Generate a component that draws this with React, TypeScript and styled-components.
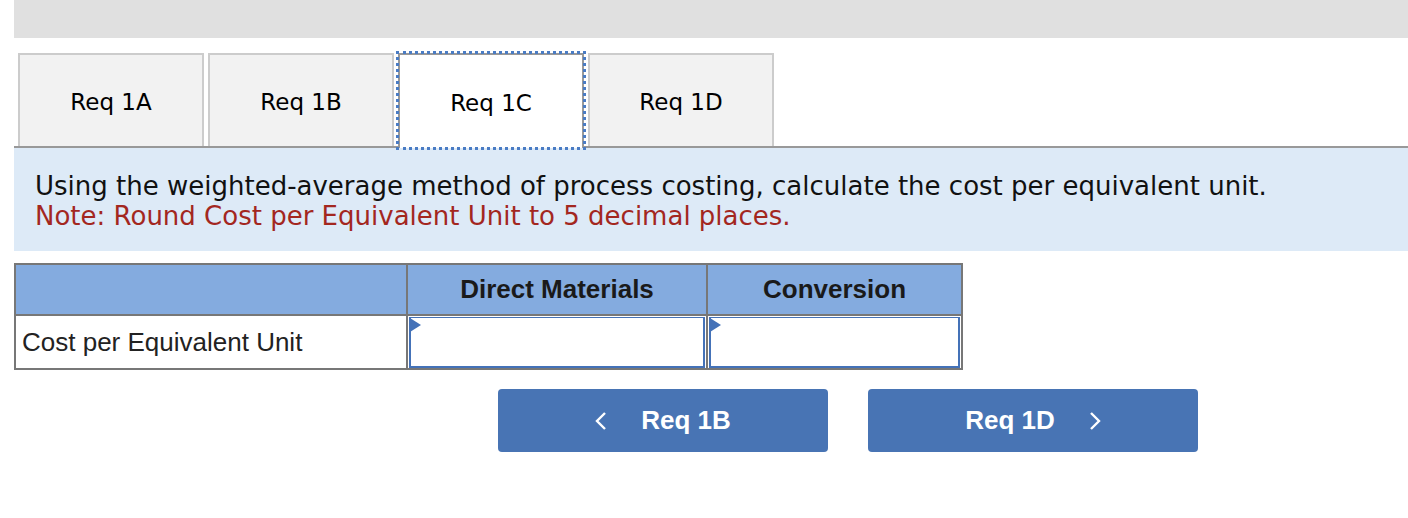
import React from "react";
import styled, { createGlobalStyle } from "styled-components";

const GlobalStyle = createGlobalStyle`
  body {
    margin: 0;
    background: #ffffff;
  }
`;

const Page = styled.div`
  padding-left: 14px;
  width: 1394px;
`;

const TopBar = styled.div`
  height: 38px;
  background: #e0e0e0;
`;

const TabBar = styled.div`
  display: flex;
  gap: 4px;
  margin-top: 15px;
  padding-left: 4px;
  height: 93px;
  border-bottom: 2px solid #999999;
`;

const Tab = styled.button<{ $active?: boolean }>`
  box-sizing: border-box;
  width: 186px;
  height: ${(p) => (p.$active ? "95px" : "93px")};
  margin: 0;
  padding: ${(p) => (p.$active ? "3px 0 1px" : "3px 0 0")};
  border: 2px solid ${(p) => (p.$active ? "#999999" : "#cccccc")};
  border-bottom: none;
  background: ${(p) => (p.$active ? "#ffffff" : "#f2f2f2")};
  font-family: "DejaVu Sans", Verdana, sans-serif;
  font-size: 23px;
  color: #000000;
  outline: ${(p) => (p.$active ? "3px dotted #4a7cc4" : "none")};
  outline-offset: -1px;
  position: relative;
  cursor: pointer;
`;

const Prompt = styled.div`
  background: #ddeaf7;
  padding: 23px 21px 20px;
  font-family: "DejaVu Sans", Verdana, sans-serif;
  font-size: 26px;
  line-height: 30px;
  color: #111111;
`;

const Note = styled.div`
  color: #a3271f;
`;

const Grid = styled.table`
  margin-top: 12px;
  border-collapse: collapse;
  border: 2px solid #777777;
  font-family: "Liberation Sans", Arial, sans-serif;
  font-size: 26px;
  color: #222222;
`;

const HeadCell = styled.th<{ $w: number }>`
  width: ${(p) => p.$w}px;
  height: 49px;
  padding: 0;
  background: #84abdf;
  border: 2px solid #777777;
  font-weight: bold;
  color: #1a1a1a;
  text-align: center;
`;

const LabelCell = styled.td`
  height: 51px;
  padding: 0 0 0 6px;
  border: 2px solid #777777;
  text-align: left;
`;

const InputCell = styled.td`
  height: 51px;
  padding: 1px 1px 0;
  border: 2px solid #777777;
`;

const Entry = styled.div`
  position: relative;
  box-sizing: border-box;
  height: 51px;
  border: 2px solid #4472b8;
  border-top-width: 1px;
  background: #ffffff;

  &::before {
    content: "";
    position: absolute;
    left: -1px;
    top: 0;
    border-top: 7px solid transparent;
    border-bottom: 7px solid transparent;
    border-left: 11px solid #4472b8;
  }
`;

const NavRow = styled.div`
  display: flex;
  gap: 40px;
  margin: 19px 0 0 484px;
`;

const NavButton = styled.button`
  display: flex;
  align-items: center;
  justify-content: center;
  gap: 34px;
  width: 330px;
  height: 63px;
  border: none;
  border-radius: 4px;
  background: #4874b4;
  color: #ffffff;
  font-family: "Liberation Sans", Arial, sans-serif;
  font-weight: bold;
  font-size: 26px;
  cursor: pointer;
`;

const Chevron = ({ dir }: { dir: "left" | "right" }) => (
  <svg width="12" height="18" viewBox="0 0 12 18">
    <polyline
      points={dir === "left" ? "10,1 2,9 10,17" : "2,1 10,9 2,17"}
      fill="none"
      stroke="#ffffff"
      strokeWidth="2.4"
    />
  </svg>
);

export const App = () => {
  const tabs = ["Req 1A", "Req 1B", "Req 1C", "Req 1D"];

  return (
    <Page>
      <GlobalStyle />
      <TopBar />
      <TabBar>
        {tabs.map((t) => (
          <Tab key={t} $active={t === "Req 1C"}>
            {t}
          </Tab>
        ))}
      </TabBar>
      <Prompt>
        <div>
          Using the weighted-average method of process costing, calculate the
          cost per equivalent unit.
        </div>
        <Note>Note: Round Cost per Equivalent Unit to 5 decimal places.</Note>
      </Prompt>
      <Grid>
        <thead>
          <tr>
            <HeadCell $w={390}></HeadCell>
            <HeadCell $w={298}>Direct Materials</HeadCell>
            <HeadCell $w={253}>Conversion</HeadCell>
          </tr>
        </thead>
        <tbody>
          <tr>
            <LabelCell>Cost per Equivalent Unit</LabelCell>
            <InputCell>
              <Entry />
            </InputCell>
            <InputCell>
              <Entry />
            </InputCell>
          </tr>
        </tbody>
      </Grid>
      <NavRow>
        <NavButton>
          <Chevron dir="left" />
          <span>Req 1B</span>
        </NavButton>
        <NavButton>
          <span>Req 1D</span>
          <Chevron dir="right" />
        </NavButton>
      </NavRow>
    </Page>
  );
};

export default App;
